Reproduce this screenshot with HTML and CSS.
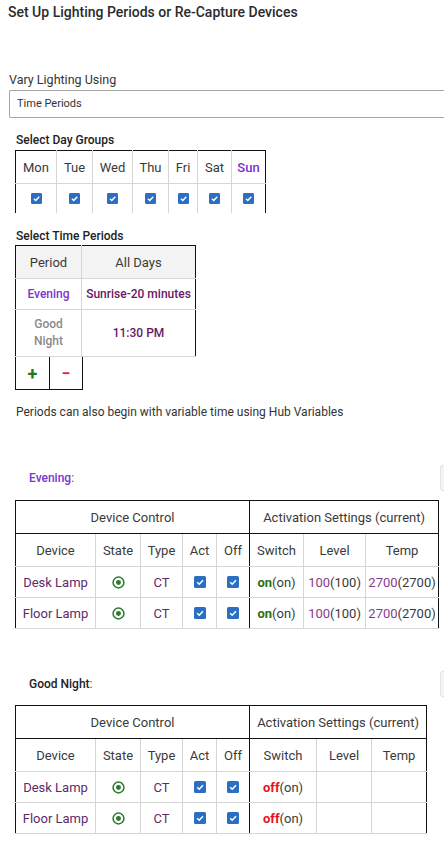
FILE: index.html
```html
<!DOCTYPE html>
<html>
<head>
<meta charset="utf-8">
<link rel="stylesheet" href="styles.css">
</head>
<body>
<div class="page">
  <h1 class="title">Set Up Lighting Periods or Re-Capture Devices</h1>

  <div class="field">
    <div class="field-label">Vary Lighting Using</div>
    <div class="select">Time Periods</div>
  </div>

  <div class="section days-section">
    <div class="section-label">Select Day Groups</div>
    <table class="grid days">
      <colgroup><col style="width:41px"><col style="width:36px"><col style="width:40px"><col style="width:36px"><col style="width:29px"><col style="width:34px"><col style="width:34px"></colgroup>
      <tr class="hrow"><td>Mon</td><td>Tue</td><td>Wed</td><td>Thu</td><td>Fri</td><td>Sat</td><td class="sun">Sun</td></tr>
      <tr class="crow">
        <td><svg class="cb sm" viewBox="0 0 12 12"><rect width="12" height="12" rx="1.5" fill="#2b6fc4"/><path d="M3.2 6.3l2 1.9 3.8-4" stroke="#fff" stroke-width="1.6" fill="none"/></svg></td>
        <td><svg class="cb sm" viewBox="0 0 12 12"><rect width="12" height="12" rx="1.5" fill="#2b6fc4"/><path d="M3.2 6.3l2 1.9 3.8-4" stroke="#fff" stroke-width="1.6" fill="none"/></svg></td>
        <td><svg class="cb sm" viewBox="0 0 12 12"><rect width="12" height="12" rx="1.5" fill="#2b6fc4"/><path d="M3.2 6.3l2 1.9 3.8-4" stroke="#fff" stroke-width="1.6" fill="none"/></svg></td>
        <td><svg class="cb sm" viewBox="0 0 12 12"><rect width="12" height="12" rx="1.5" fill="#2b6fc4"/><path d="M3.2 6.3l2 1.9 3.8-4" stroke="#fff" stroke-width="1.6" fill="none"/></svg></td>
        <td><svg class="cb sm" viewBox="0 0 12 12"><rect width="12" height="12" rx="1.5" fill="#2b6fc4"/><path d="M3.2 6.3l2 1.9 3.8-4" stroke="#fff" stroke-width="1.6" fill="none"/></svg></td>
        <td><svg class="cb sm" viewBox="0 0 12 12"><rect width="12" height="12" rx="1.5" fill="#2b6fc4"/><path d="M3.2 6.3l2 1.9 3.8-4" stroke="#fff" stroke-width="1.6" fill="none"/></svg></td>
        <td><svg class="cb sm" viewBox="0 0 12 12"><rect width="12" height="12" rx="1.5" fill="#2b6fc4"/><path d="M3.2 6.3l2 1.9 3.8-4" stroke="#fff" stroke-width="1.6" fill="none"/></svg></td>
      </tr>
    </table>
  </div>

  <div class="section times-section">
    <div class="section-label">Select Time Periods</div>
    <table class="grid times">
      <colgroup><col style="width:66px"><col style="width:114px"></colgroup>
      <tr class="thead"><td>Period</td><td>All Days</td></tr>
      <tr class="trow1"><td class="p-evening">Evening</td><td class="p-time">Sunrise-20 minutes</td></tr>
      <tr class="trow2"><td class="p-night">Good<br>Night</td><td class="p-time">11:30 PM</td></tr>
    </table>
    <div class="pm">
      <div class="pm-btn plus">+</div>
      <div class="pm-btn minus">&minus;</div>
    </div>
  </div>

  <p class="note">Periods can also begin with variable time using Hub Variables</p>

  <div class="period-block evening-block">
    <div class="period-head">
      <span class="period-name evening">Evening</span><span class="colon">:</span>
      <span class="edge-btn"></span>
    </div>
    <table class="grid dev">
      <colgroup><col style="width:80px"><col style="width:45px"><col style="width:42px"><col style="width:34px"><col style="width:33px"><col style="width:54px"><col style="width:62px"><col style="width:73px"></colgroup>
      <tr class="r1"><td colspan="5" class="divr">Device Control</td><td colspan="3">Activation Settings (current)</td></tr>
      <tr class="r2"><td>Device</td><td>State</td><td>Type</td><td>Act</td><td class="divr">Off</td><td>Switch</td><td>Level</td><td>Temp</td></tr>
      <tr class="r3">
        <td class="dname">Desk Lamp</td>
        <td><svg class="rd" viewBox="0 0 12 12"><circle cx="6" cy="6" r="5" stroke="#2c7a2e" stroke-width="1.4" fill="none"/><circle cx="6" cy="6" r="2.3" fill="#2c7a2e"/></svg></td>
        <td class="ct">CT</td>
        <td><svg class="cb" viewBox="0 0 12 12"><rect width="12" height="12" rx="1.5" fill="#2b6fc4"/><path d="M3.2 6.3l2 1.9 3.8-4" stroke="#fff" stroke-width="1.5" fill="none"/></svg></td>
        <td class="divr"><svg class="cb" viewBox="0 0 12 12"><rect width="12" height="12" rx="1.5" fill="#2b6fc4"/><path d="M3.2 6.3l2 1.9 3.8-4" stroke="#fff" stroke-width="1.5" fill="none"/></svg></td>
        <td><span class="on">on</span>(on)</td>
        <td><span class="val">100</span>(100)</td>
        <td><span class="val">2700</span>(2700)</td>
      </tr>
      <tr class="r3">
        <td class="dname">Floor Lamp</td>
        <td><svg class="rd" viewBox="0 0 12 12"><circle cx="6" cy="6" r="5" stroke="#2c7a2e" stroke-width="1.4" fill="none"/><circle cx="6" cy="6" r="2.3" fill="#2c7a2e"/></svg></td>
        <td class="ct">CT</td>
        <td><svg class="cb" viewBox="0 0 12 12"><rect width="12" height="12" rx="1.5" fill="#2b6fc4"/><path d="M3.2 6.3l2 1.9 3.8-4" stroke="#fff" stroke-width="1.5" fill="none"/></svg></td>
        <td class="divr"><svg class="cb" viewBox="0 0 12 12"><rect width="12" height="12" rx="1.5" fill="#2b6fc4"/><path d="M3.2 6.3l2 1.9 3.8-4" stroke="#fff" stroke-width="1.5" fill="none"/></svg></td>
        <td><span class="on">on</span>(on)</td>
        <td><span class="val">100</span>(100)</td>
        <td><span class="val">2700</span>(2700)</td>
      </tr>
    </table>
  </div>

  <div class="period-block night-block">
    <div class="period-head">
      <span class="period-name night">Good Night</span><span class="colon">:</span>
      <span class="edge-btn"></span>
    </div>
    <table class="grid dev dev2">
      <colgroup><col style="width:80px"><col style="width:45px"><col style="width:42px"><col style="width:34px"><col style="width:33px"><col style="width:67px"><col style="width:55px"><col style="width:55px"></colgroup>
      <tr class="r1"><td colspan="5" class="divr">Device Control</td><td colspan="3">Activation Settings (current)</td></tr>
      <tr class="r2"><td>Device</td><td>State</td><td>Type</td><td>Act</td><td class="divr">Off</td><td>Switch</td><td>Level</td><td>Temp</td></tr>
      <tr class="r3">
        <td class="dname">Desk Lamp</td>
        <td><svg class="rd" viewBox="0 0 12 12"><circle cx="6" cy="6" r="5" stroke="#2c7a2e" stroke-width="1.4" fill="none"/><circle cx="6" cy="6" r="2.3" fill="#2c7a2e"/></svg></td>
        <td class="ct">CT</td>
        <td><svg class="cb" viewBox="0 0 12 12"><rect width="12" height="12" rx="1.5" fill="#2b6fc4"/><path d="M3.2 6.3l2 1.9 3.8-4" stroke="#fff" stroke-width="1.5" fill="none"/></svg></td>
        <td class="divr"><svg class="cb" viewBox="0 0 12 12"><rect width="12" height="12" rx="1.5" fill="#2b6fc4"/><path d="M3.2 6.3l2 1.9 3.8-4" stroke="#fff" stroke-width="1.5" fill="none"/></svg></td>
        <td><span class="off">off</span>(on)</td>
        <td></td>
        <td></td>
      </tr>
      <tr class="r3">
        <td class="dname">Floor Lamp</td>
        <td><svg class="rd" viewBox="0 0 12 12"><circle cx="6" cy="6" r="5" stroke="#2c7a2e" stroke-width="1.4" fill="none"/><circle cx="6" cy="6" r="2.3" fill="#2c7a2e"/></svg></td>
        <td class="ct">CT</td>
        <td><svg class="cb" viewBox="0 0 12 12"><rect width="12" height="12" rx="1.5" fill="#2b6fc4"/><path d="M3.2 6.3l2 1.9 3.8-4" stroke="#fff" stroke-width="1.5" fill="none"/></svg></td>
        <td class="divr"><svg class="cb" viewBox="0 0 12 12"><rect width="12" height="12" rx="1.5" fill="#2b6fc4"/><path d="M3.2 6.3l2 1.9 3.8-4" stroke="#fff" stroke-width="1.5" fill="none"/></svg></td>
        <td><span class="off">off</span>(on)</td>
        <td></td>
        <td></td>
      </tr>
    </table>
  </div>
</div>
</body>
</html>
```

FILE: styles.css
```css
html, body {
  margin: 0;
  padding: 0;
  background: #fff;
  overflow: hidden;
}
body {
  font-family: Roboto, "Liberation Sans", Arial, sans-serif;
  color: #333;
  width: 444px;
}
.page {
  padding-top: 2px;
}
.title {
  margin: 0 0 0 8px;
  font-size: 14px;
  line-height: 20px;
  font-weight: 500;
  color: #2b2b2b;
}
.field {
  margin-top: 50px;
  padding-left: 9px;
}
.field-label {
  font-size: 12.5px;
  line-height: 16px;
  color: #333;
}
.select {
  margin-top: 2px;
  height: 26px;
  border: 1px solid #a6a6a6;
  border-right: none;
  border-radius: 2px 0 0 2px;
  font-size: 11px;
  line-height: 26px;
  padding-left: 7px;
  color: #333;
}
.section {
  padding-left: 15px;
}
.days-section { margin-top: 14px; }
.times-section { margin-top: 15px; }
.section-label {
  margin-left: 1px;
  font-size: 12px;
  line-height: 16px;
  font-weight: 500;
  color: #222;
}
.days-section .section-label { margin-bottom: 2px; }
.times-section .section-label { margin-bottom: 1px; }

.grid {
  border-collapse: collapse;
  table-layout: fixed;
}
.grid td {
  padding: 0;
  text-align: center;
  vertical-align: middle;
  border: 1px solid #d6d6d6;
  font-size: 13px;
  color: #3a3a3a;
}
.grid tr:first-child td { border-top: 1px solid #111; }
.grid td:first-child { border-left: 1px solid #111; }
.grid td:last-child { border-right: 1px solid #111; }

.days { width: 251px; }
.days .hrow td { height: 32px; }
.days .crow td { height: 29px; border-bottom: none; }
.days .sun { color: #7b2fd0; font-weight: 500; }
.cb { display: block; margin: 0 auto; width: 12px; height: 12px; }
.cb.sm { width: 11px; height: 11px; }
.rd { display: block; margin: 0 auto; width: 13px; height: 13px; }

.times { width: 181px; }
.times .thead td { height: 32px; background: #f3f3f3; }
.times .trow1 td { height: 30px; font-size: 12px; font-weight: 500; }
.times .trow2 td { height: 46px; font-size: 12px; font-weight: 500; line-height: 17px; }
.p-evening { color: #7b35cf !important; }
.p-night { color: #8a8a8a !important; }
.p-time { color: #6a1763 !important; }

.pm {
  display: flex;
  width: 66px;
  height: 32px;
  border: 1px solid #111;
  border-top: none;
  box-sizing: content-box;
}
.pm-btn {
  display: flex;
  align-items: center;
  justify-content: center;
  font-size: 18px;
  font-weight: 700;
}
.plus { width: 33px; border-right: 1px solid #111; color: #1d7a1d; }
.minus { flex: 1; color: #e0253a; font-size: 16px; }

.note {
  margin: 14px 0 0 16px;
  font-size: 12px;
  line-height: 16px;
  color: #333;
}

.period-block { padding-left: 15px; }
.evening-block { margin-top: 50px; }
.night-block { margin-top: 47px; }
.period-head {
  display: flex;
  align-items: center;
  height: 16px;
  margin-left: 14px;
  font-size: 12px;
  line-height: 16px;
}
.evening-block .period-head { margin-bottom: 14px; }
.night-block .period-head { margin-bottom: 13px; }
.period-name { font-weight: 500; }
.period-name.evening { color: #7b35cf; }
.period-name.night { color: #222; }
.colon { color: #555; }
.edge-btn {
  margin-left: auto;
  width: 3px;
  height: 24px;
  border: 1px solid #e4e4e4;
  border-right: none;
  border-radius: 3px 0 0 3px;
  background: #f4f4f4;
}

.dev { width: 424px; }
.dev2 { width: 412px; }
.dev .r1 td { height: 32px; border-bottom: 1px solid #111; }
.dev .r2 td { height: 32px; }
.dev .r3 td { height: 30px; }
.dev td.divr { border-right: 1px solid #111; }
.dname { color: #5e2a6a !important; }
.ct { color: #5e2a6a !important; }
.on { color: #2e6e12; font-weight: 700; }
.off { color: #e8101e; font-weight: 700; }
.val { color: #8a3a8f; }
```
